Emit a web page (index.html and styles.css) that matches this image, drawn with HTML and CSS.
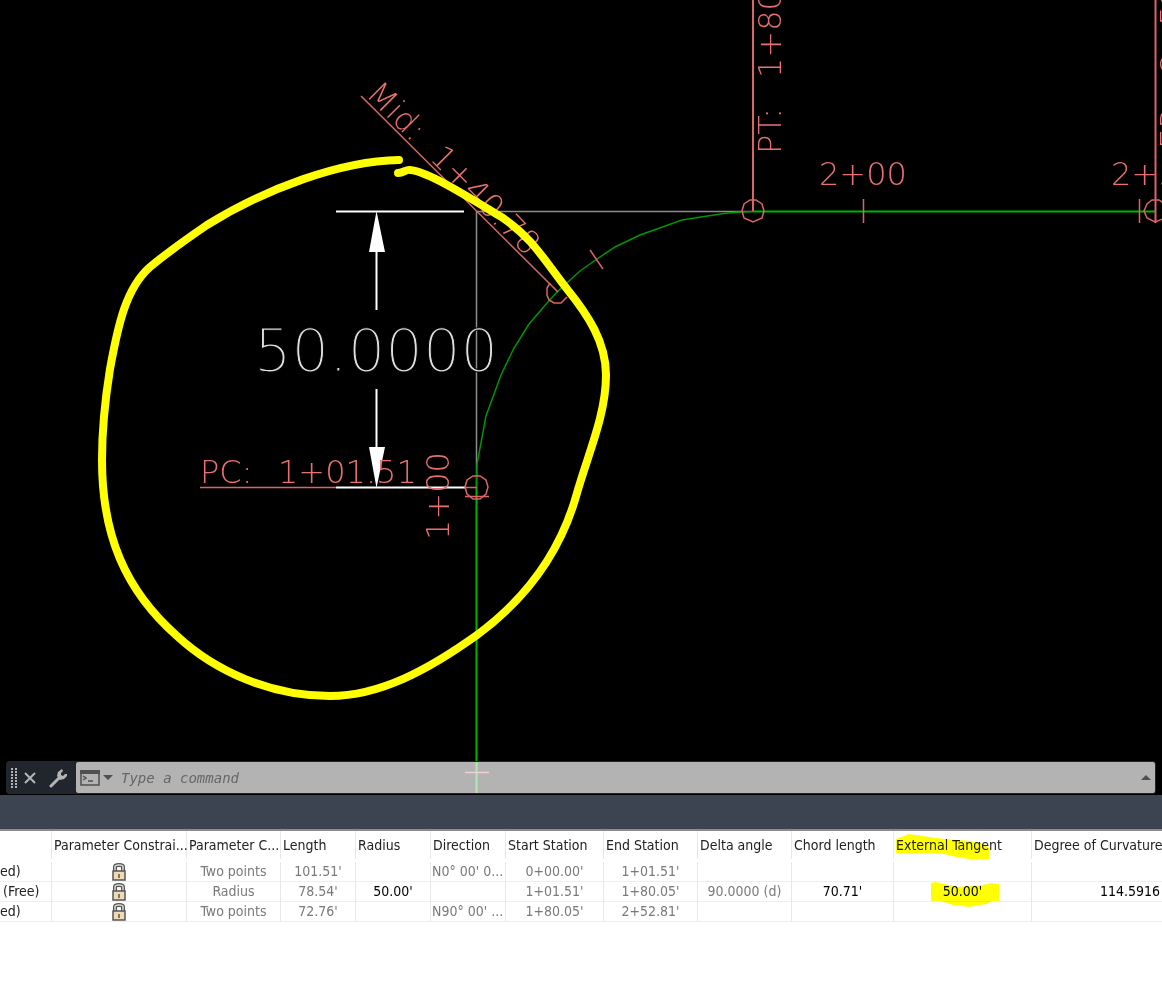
FILE: index.html
```
<!DOCTYPE html>
<html lang="en">
    <head>
        <meta charset="UTF-8" />
        <meta name="viewport" content="width=device-width, initial-scale=1.0" />
        <title>Alignment Layout</title>
        <link rel="stylesheet" href="styles.css">
    </head>

    <body>
        <!-- drawing area -->
        <main class="drawing">
            <svg class="model" viewBox="0 0 1162 795">
                <!-- tangents up to the PI -->
                <path class="tangent" d="M753 211.500H476.500V488" />

                <!-- alignment -->
                <path class="line" d="M753 211.500H1155M476.500 488V794" />
                <path class="arc" d="M476.500 488L477 464L486 416L501 375L514 348L529 324L547 303L557 292L580 271L597 259L615 247L640 235L682 220L727 213L753 211.500" />

                <!-- dimension -->
                <g class="dim">
                    <path d="M336 211.500H464M376.500 240V310M376.500 389V460M336 487.500H465" />
                    <path class="arrow" d="M376.500 211L385 252H369ZM376.500 488L385 447H369Z" />
                    <text x="254" y="371">50.0000</text>
                </g>

                <!-- station labels -->
                <g class="label">
                    <path d="M200 487.500H336M465 487.500H477M465 496.500H489M465 772.500H489" />
                    <path d="M361 96L558 292M590 250L603 269M863.500 199V223M1139.500 199V223" />
                    <path class="leader" d="M753 0V211M1155.500 0V223" />
                    <path d="M473 476H480L486 480L488 487L486 494L480 499H473L467 494L465 487L467 480Z" />
                    <path d="M750 200H756L762 204L764 211L762 218L753 222L744 218L742 211L744 204Z" />
                    <path d="M1152 200H1159L1165 204V218L1155 222L1147 218L1144 211L1147 204Z" />
                    <path d="M550 283L547 288V295L549 300L554 303H561L567 297" />
                    <text x="200" y="483">PC:<tspan x="278">1+01.51</tspan></text>
                    <text transform="translate(365 95) rotate(45)">Mid:<tspan x="90">1+40.78</tspan></text>
                    <text transform="translate(449 540) rotate(-90)">1+00</text>
                    <text transform="translate(781 154) rotate(-90)">PT:<tspan x="76">1+80.05</tspan></text>
                    <text transform="translate(1183 149) rotate(-90)">EP:<tspan x="76">2+52.81</tspan></text>
                    <text x="819" y="185">2+00</text>
                    <text x="1111" y="185">2+50</text>
                </g>

                <!-- marker circle -->
                <path class="marker" d="M399 160C340 161 265 189 207 225C188 238 168 252 150 267C126 288 118 325 110 369C105 400 102 430 102 460C102 535 125 590 177 636C215 671 270 696 330 696C380 696 428 670 477 635C523 601 560 555 577 493C588 454 606 415 606 375C606 342 588 315 567 289C542 257 533 239 503 218C475 201 428 171 410 170C406 169 404 173 398 173" />
            </svg>

            <form class="command">
                <div class="grip">
                    <svg class="dots" width="7" height="22" viewBox="0 0 7 22"><path d="M1 1V22M5 1V22" /></svg>
                    <button type="button" aria-label="Close">
                        <svg width="12" height="12" viewBox="0 0 12 12"><path class="cross" d="M1 1L11 11M11 1L1 11" /></svg>
                    </button>
                    <button type="button" aria-label="Customize">
                        <svg width="20" height="20" viewBox="0 0 20 20"><path class="wrench" d="M3 18L11 10" /><path class="jaw" d="M14 1L10 4L9 8L12 12L16 11L19 8V6H17L15 8L13 7V5L15 3Z" /></svg>
                    </button>
                </div>
                <div class="entry">
                    <button type="button" class="recent" aria-label="Recent commands">
                        <svg width="33" height="16" viewBox="0 0 33 16">
                            <path class="frame" d="M1 1H19V15H1Z" />
                            <path class="solid" d="M0 0H20V4H0ZM23 5H33L28 10Z" />
                            <path class="prompt" d="M3 6L6 8L3 10M8 11H13" />
                        </svg>
                    </button>
                    <input type="text" aria-label="Command" placeholder="Type a command" />
                    <button type="button" aria-label="History">
                        <svg width="10" height="5" viewBox="0 0 10 5"><path class="solid" d="M0 5L5 0L10 5Z" /></svg>
                    </button>
                </div>
            </form>
        </main>

        <div class="titlebar"></div>

        <!-- entities -->
        <div class="panorama">
            <svg class="defs" width="0" height="0">
                <symbol id="lock" viewBox="0 0 14 18">
                    <path d="M3 9V4Q3 2 7 2Q11 2 11 4V9" fill="none" stroke="#555" stroke-width="4" />
                    <path d="M3 9V4Q3 2 7 2Q11 2 11 4V9" fill="none" stroke="#d8d8d8" stroke-width="1.500" />
                    <rect x="1" y="8" width="12" height="9" fill="#f0d9b5" stroke="#555" stroke-width="1.500" />
                    <path d="M7 11V15" stroke="#555" stroke-width="1.500" />
                </symbol>
            </svg>
            <table>
                <colgroup>
                    <col class="w52"><col class="w135"><col class="w94"><col class="w75"><col class="w75"><col class="w75">
                    <col class="w98"><col class="w94"><col class="w94"><col class="w102"><col class="w138"><col>
                </colgroup>
                <thead>
                    <tr>
                        <th></th>
                        <th>Parameter Constrai...</th>
                        <th>Parameter C...</th>
                        <th>Length</th>
                        <th>Radius</th>
                        <th>Direction</th>
                        <th>Start Station</th>
                        <th>End Station</th>
                        <th>Delta angle</th>
                        <th>Chord length</th>
                        <th class="marked">External Tangent
                            <svg class="ink head" width="94" height="26" viewBox="0 0 94 26"><path d="M1 6L14 1L28 3L49 6L76 8L89 11L94 15V26H75L66 25L49 21L38 20H1Z" /></svg>
                        </th>
                        <th>Degree of Curvature</th>
                    </tr>
                </thead>
                <tbody>
                    <tr>
                        <td class="type">ed)</td>
                        <td><svg class="lock"><use href="#lock" /></svg></td>
                        <td>Two points</td>
                        <td>101.51'</td>
                        <td></td>
                        <td class="dir">N0° 00' 0...</td>
                        <td>0+00.00'</td>
                        <td>1+01.51'</td>
                        <td></td>
                        <td></td>
                        <td></td>
                        <td></td>
                    </tr>
                    <tr>
                        <td class="type free">(Free)</td>
                        <td><svg class="lock"><use href="#lock" /></svg></td>
                        <td>Radius</td>
                        <td>78.54'</td>
                        <td class="edit">50.00'</td>
                        <td></td>
                        <td>1+01.51'</td>
                        <td>1+80.05'</td>
                        <td>90.0000 (d)</td>
                        <td class="edit">70.71'</td>
                        <td class="edit marked">50.00'
                            <svg class="ink cell" width="68" height="25" viewBox="0 0 68 25"><path d="M0 1L5 0L18 3L27 5L52 3L60 1L68 2V19H61L56 22L48 23L39 25L22 23L10 19H0Z" /></svg>
                        </td>
                        <td class="edit degree">114.5916</td>
                    </tr>
                    <tr>
                        <td class="type">ed)</td>
                        <td><svg class="lock"><use href="#lock" /></svg></td>
                        <td>Two points</td>
                        <td>72.76'</td>
                        <td></td>
                        <td class="dir">N90° 00' ...</td>
                        <td>1+80.05'</td>
                        <td>2+52.81'</td>
                        <td></td>
                        <td></td>
                        <td></td>
                        <td></td>
                    </tr>
                </tbody>
            </table>
        </div>
    </body>
</html>
```
FILE: styles.css
```
* {
    box-sizing: border-box;
    margin: 0;
    padding: 0;
}
body {
    min-height: 100vh;
    background: #fff;
    font-family: "DejaVu Sans Condensed", "DejaVu Sans", sans-serif;
    font-size: 14px;
}
button {
    display: flex;
    border: 0;
    background: none;
}

/* drawing */
.drawing {
    position: relative;
    background: #000;
}
.model {
    display: block;
    width: 100%;
}
.model path {
    fill: none;
}
.model text {
    font-family: "DejaVu Sans", sans-serif;
    font-weight: 200;
}
.model .tangent {
    stroke: #8c8c8c;
    stroke-width: 1.5;
}
.model .line {
    stroke: #00b400;
    stroke-width: 2;
}
.model .arc {
    stroke: #009600;
    stroke-width: 1.5;
}
.dim path {
    stroke: #fff;
    stroke-width: 2;
}
.dim .arrow {
    fill: #fff;
    stroke: none;
}
.dim text {
    font-size: 59px;
    fill: #e0e0e0;
    stroke: #000;
    stroke-width: 1;
}
.label path {
    stroke: #d96666;
    stroke-width: 1.5;
}
.label .leader {
    stroke-width: 2;
}
.label text {
    font-size: 32px;
    fill: #e87070;
}
.model .marker {
    stroke: #ff0;
    stroke-width: 8;
    stroke-linecap: round;
    stroke-linejoin: round;
}

/* command line */
.command {
    position: absolute;
    left: 6px;
    right: 6px;
    bottom: 1px;
    display: flex;
    height: 33px;
    border: 1px solid #20262f;
    border-radius: 3px;
}
.grip {
    display: flex;
    align-items: center;
    gap: 6px;
    width: 69px;
    padding-left: 4px;
    background: #20252e;
}
.grip button:last-child {
    margin-left: 6px;
}
.dots path {
    stroke: #b4b4b4;
    stroke-width: 2;
    stroke-dasharray: 2 1;
}
.cross {
    stroke: #b4b4b4;
    stroke-width: 2;
}
.wrench {
    stroke: #b4b4b4;
    stroke-width: 3;
    stroke-linecap: round;
}
.jaw {
    fill: #b4b4b4;
}
.entry {
    flex: 1;
    display: flex;
    align-items: center;
    gap: 8px;
    padding: 0 4px;
    border-radius: 2px;
    background: rgba(255, 255, 255, 0.7);
}
.entry input {
    flex: 1;
    min-width: 0;
    border: 0;
    outline: 0;
    background: none;
    font: italic 14px "DejaVu Sans Mono", monospace;
}
.entry input::placeholder {
    color: #666;
    opacity: 1;
}
.frame,
.prompt {
    fill: none;
    stroke: #505050;
    stroke-width: 1.5;
}
.solid {
    fill: #505050;
}

.titlebar {
    height: 36px;
    background: #3c4452;
    border-bottom: 2px solid #8c8c8c;
}

/* entities table */
.panorama {
    overflow: hidden;
}
.defs {
    position: absolute;
}
table {
    width: 100%;
    table-layout: fixed;
    border-spacing: 0;
}
.w52 { width: 52px; }
.w75 { width: 75px; }
.w94 { width: 94px; }
.w98 { width: 98px; }
.w102 { width: 102px; }
.w135 { width: 135px; }
.w138 { width: 138px; }
th,
td {
    white-space: nowrap;
    border-right: 1px solid #e8e8e8;
}
th:last-child,
td:last-child {
    border-right: 0;
}
th {
    height: 28px;
    padding: 0 0 0 2px;
    font-weight: normal;
    text-align: left;
    color: #222;
}
tbody::before {
    content: "";
    display: block;
    height: 3px;
}
td {
    height: 20px;
    line-height: 19px;
    border-bottom: 1px solid #eee;
    text-align: center;
    color: #7a7a7a;
}
.type {
    text-align: left;
    color: #222;
}
.free {
    padding-left: 3px;
}
.dir {
    padding-left: 1px;
    text-align: left;
}
.edit {
    color: #000;
}
.degree {
    padding-right: 2px;
    text-align: right;
}
.lock {
    display: block;
    width: 14px;
    height: 18px;
    margin: 0 auto;
}

/* highlighter strokes over the external tangent */
.marked {
    position: relative;
}
.ink {
    position: absolute;
    fill: #ff0;
    mix-blend-mode: multiply;
}
.ink.head {
    left: 1px;
    top: 2px;
}
.ink.cell {
    left: 37px;
    top: 0;
}
```
